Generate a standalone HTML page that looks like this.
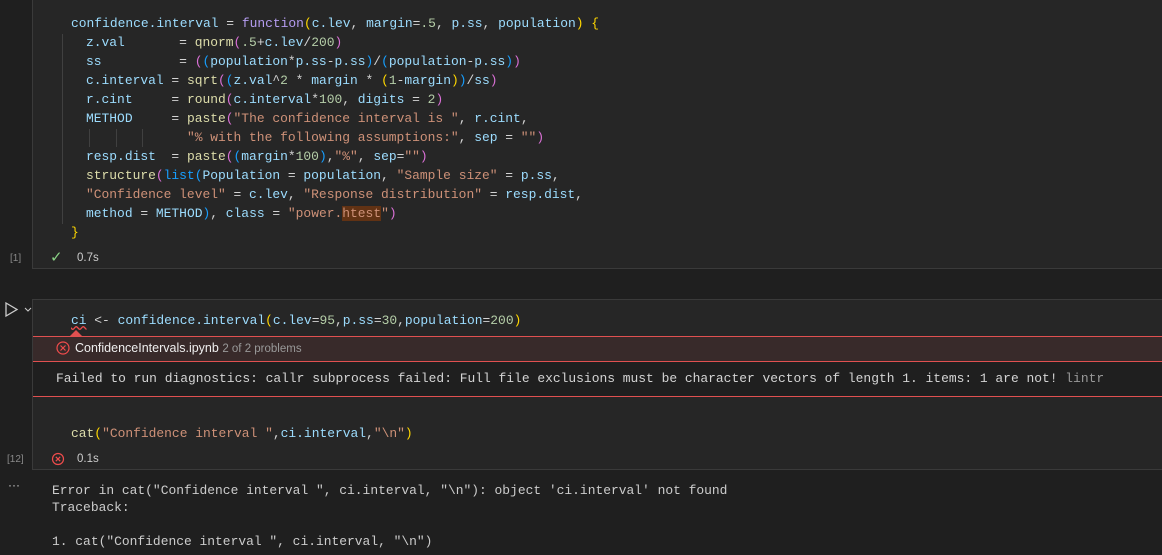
<!DOCTYPE html>
<html><head><meta charset="utf-8"><style>
body{margin:0;width:1162px;height:555px;background:#1f1f1f;overflow:hidden;position:relative;font-family:"Liberation Mono",monospace;font-size:12.95px;color:#d4d4d4}
.cell{position:absolute;left:32px;right:-2px;background:#262626;border:1px solid #3a3a3a}
.l{position:absolute;white-space:pre;line-height:19px;height:19px}
.i{color:#9cdcfe}.f{color:#dcdcaa}.s{color:#ce9178}.n{color:#b5cea8}.k{color:#b49cf0}
.b1{color:#ffd700}.b2{color:#da70d6}.b3{color:#179fff}
.ui{font-family:"Liberation Sans",sans-serif;font-size:12px}
.g{position:absolute;width:1px;background:#404040}
</style></head><body>
<div class="cell" style="top:-2px;height:269px"></div>
<div class="cell" style="top:299px;height:169px"></div>
<div class="g" style="left:62px;top:34px;height:190px"></div>
<div class="g" style="left:89px;top:129px;height:18px"></div>
<div class="g" style="left:116px;top:129px;height:18px"></div>
<div class="g" style="left:142px;top:129px;height:18px"></div>
<div class="l" style="left:71px;top:14px"><span class="i">confidence.interval</span> = <span class="k">function</span><span class="b1">(</span><span class="i">c.lev</span>, <span class="i">margin</span>=<span class="n">.5</span>, <span class="i">p.ss</span>, <span class="i">population</span><span class="b1">)</span> <span class="b1">{</span></div>
<div class="l" style="left:86px;top:33px"><span class="i">z.val</span>       = <span class="f">qnorm</span><span class="b2">(</span><span class="n">.5</span>+<span class="i">c.lev</span>/<span class="n">200</span><span class="b2">)</span></div>
<div class="l" style="left:86px;top:52px"><span class="i">ss</span>          = <span class="b2">(</span><span class="b3">(</span><span class="i">population</span>*<span class="i">p.ss</span>-<span class="i">p.ss</span><span class="b3">)</span>/<span class="b3">(</span><span class="i">population</span>-<span class="i">p.ss</span><span class="b3">)</span><span class="b2">)</span></div>
<div class="l" style="left:86px;top:71px"><span class="i">c.interval</span> = <span class="f">sqrt</span><span class="b2">(</span><span class="b3">(</span><span class="i">z.val</span>^<span class="n">2</span> * <span class="i">margin</span> * <span class="b1">(</span><span class="n">1</span>-<span class="i">margin</span><span class="b1">)</span><span class="b3">)</span>/<span class="i">ss</span><span class="b2">)</span></div>
<div class="l" style="left:86px;top:90px"><span class="i">r.cint</span>     = <span class="f">round</span><span class="b2">(</span><span class="i">c.interval</span>*<span class="n">100</span>, <span class="i">digits</span> = <span class="n">2</span><span class="b2">)</span></div>
<div class="l" style="left:86px;top:109px"><span class="i">METHOD</span>     = <span class="f">paste</span><span class="b2">(</span><span class="s">"The confidence interval is "</span>, <span class="i">r.cint</span>,</div>
<div class="l" style="left:86px;top:128px">             <span class="s">"% with the following assumptions:"</span>, <span class="i">sep</span> = <span class="s">""</span><span class="b2">)</span></div>
<div class="l" style="left:86px;top:147px"><span class="i">resp.dist</span>  = <span class="f">paste</span><span class="b2">(</span><span class="b3">(</span><span class="i">margin</span>*<span class="n">100</span><span class="b3">)</span>,<span class="s">"%"</span>, <span class="i">sep</span>=<span class="s">""</span><span class="b2">)</span></div>
<div class="l" style="left:86px;top:166px"><span class="f">structure</span><span class="b2">(</span><span class="b3">list</span><span class="b3">(</span><span class="i">Population</span> = <span class="i">population</span>, <span class="s">"Sample size"</span> = <span class="i">p.ss</span>,</div>
<div class="l" style="left:86px;top:185px"><span class="s">"Confidence level"</span> = <span class="i">c.lev</span>, <span class="s">"Response distribution"</span> = <span class="i">resp.dist</span>,</div>
<div class="l" style="left:86px;top:204px"><span class="i">method</span> = <span class="i">METHOD</span><span class="b3">)</span>, <span class="i">class</span> = <span class="s">"power.<span style="background:#613214">htest</span>"</span><span class="b2">)</span></div>
<div class="l" style="left:71px;top:223px"><span class="b1">}</span></div>
<div class="l ui" style="left:10px;top:249px;color:#8a8a8a;font-size:10px">[1]</div>
<div class="l ui" style="left:50px;top:248px;color:#89d185;font-size:15px">✓</div>
<div class="l ui" style="left:77px;top:249px;font-size:11.5px;color:#ccc">0.7s</div>
<svg style="position:absolute;left:4px;top:302px" width="34" height="16"><path d="M2 1 L13 7.5 L2 14 Z" fill="none" stroke="#ccc" stroke-width="1.3"/><path d="M21 6 L24 9 L27 6" fill="none" stroke="#ccc" stroke-width="1"/></svg>
<div class="l" style="left:71px;top:311px"><span class="i" style="text-decoration:underline wavy #f14c4c">ci</span> &lt;- <span class="i">confidence.interval</span><span class="b1">(</span><span class="i">c.lev</span>=<span class="n">95</span>,<span class="i">p.ss</span>=<span class="n">30</span>,<span class="i">population</span>=<span class="n">200</span><span class="b1">)</span></div>
<div style="position:absolute;left:33px;right:0;top:336px;height:24px;background:#382a2a;border-top:1px solid #e05050;border-bottom:1px solid #e05050"></div>
<div style="position:absolute;left:70px;top:330px;width:0;height:0;border-left:6px solid transparent;border-right:6px solid transparent;border-bottom:6px solid #e05050"></div>
<svg style="position:absolute;left:56px;top:341px" width="14" height="14"><circle cx="7" cy="7" r="6" fill="none" stroke="#f14c4c" stroke-width="1.2"/><path d="M4.5 4.5L9.5 9.5M9.5 4.5L4.5 9.5" stroke="#f14c4c" stroke-width="1.2"/></svg>
<div class="l ui" style="left:75px;top:339px;font-size:12.5px;color:#eee">ConfidenceIntervals.ipynb <span style="color:#999;font-size:11.5px">2 of 2 problems</span></div>
<div style="position:absolute;left:33px;right:0;top:362px;height:34px;background:#1f1f1f;border-bottom:1px solid #e05050"></div>
<div class="l" style="left:56px;top:369px">Failed to run diagnostics: callr subprocess failed: Full file exclusions must be character vectors of length 1. items: 1 are not! <span style="color:#999">lintr</span></div>
<div class="l" style="left:71px;top:424px"><span class="f">cat</span><span class="b1">(</span><span class="s">"Confidence interval "</span>,<span class="i">ci.interval</span>,<span class="s">"\n"</span><span class="b1">)</span></div>
<div class="l ui" style="left:7px;top:450px;color:#8a8a8a;font-size:10px">[12]</div>
<svg style="position:absolute;left:51px;top:452px" width="14" height="14"><circle cx="7" cy="7" r="5.5" fill="none" stroke="#f14c4c" stroke-width="1.2"/><path d="M4.8 4.8L9.2 9.2M9.2 4.8L4.8 9.2" stroke="#f14c4c" stroke-width="1.2"/></svg>
<div class="l ui" style="left:77px;top:450px;font-size:11.5px;color:#ccc">0.1s</div>
<div class="l ui" style="left:8px;top:476px;color:#ccc">···</div>
<div class="l" style="left:52px;top:481px;color:#ccc">Error in cat("Confidence interval ", ci.interval, "\n"): object 'ci.interval' not found</div>
<div class="l" style="left:52px;top:498px;color:#ccc">Traceback:</div>
<div class="l" style="left:52px;top:532px;color:#ccc">1. cat("Confidence interval ", ci.interval, "\n")</div>
</body></html>
